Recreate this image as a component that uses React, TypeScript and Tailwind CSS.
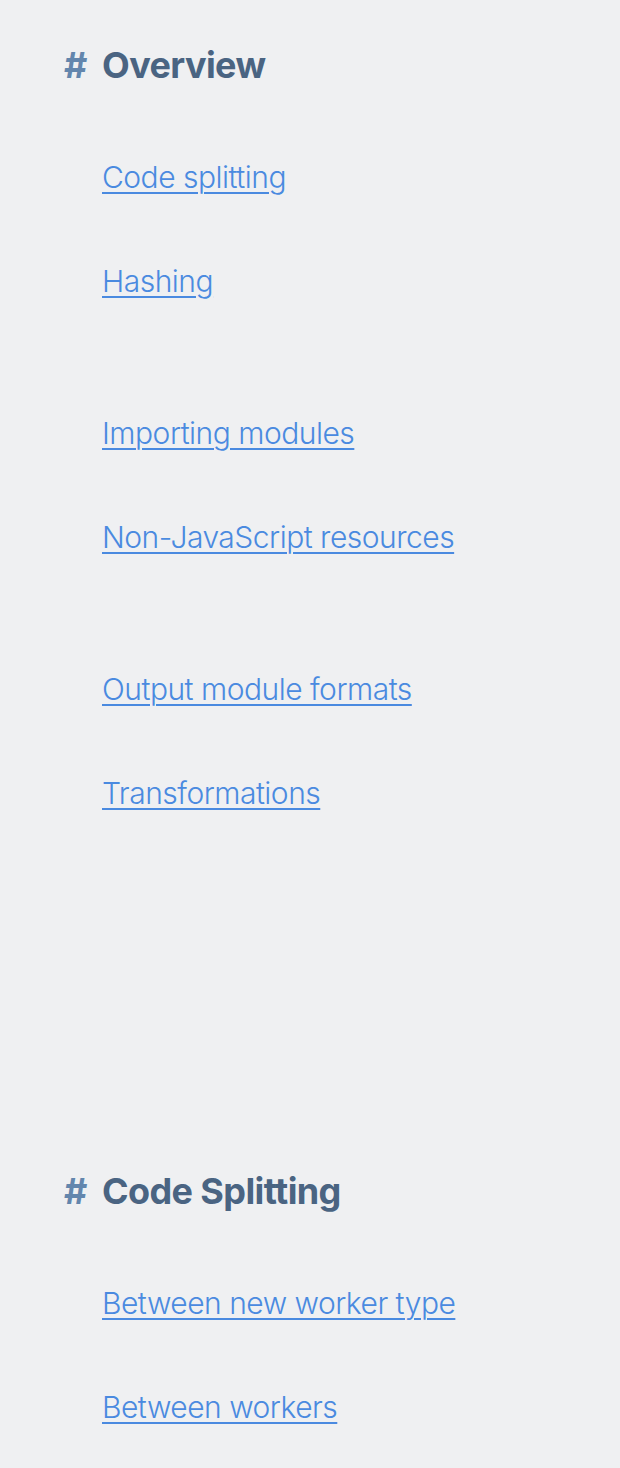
const groups = [
  {
    title: 'Overview',
    links: [
      ['Code splitting', 'Hashing'],
      ['Importing modules', 'Non-JavaScript resources'],
      ['Output module formats', 'Transformations'],
    ],
  },
  {
    title: 'Code Splitting',
    links: [['Between new worker type', 'Between workers']],
  },
];

export default function App() {
  return (
    <div className="min-h-[1468px] bg-[#eff0f2] font-['Inter',sans-serif] pl-[64px] pt-[40px]">
      {groups.map((g, i) => (
        <section key={g.title} className={i > 0 ? 'mt-[321px]' : ''}>
          <h2 className="flex items-baseline text-[36px] font-bold leading-[50px] tracking-[-0.6px] text-[#4a6482]">
            <span className="w-[38px] text-[#6386ad]">#</span>
            {g.title}
          </h2>
          <div className="pl-[38px]">
            {g.links.map((pair, j) => (
              <ul key={j} className="mt-[48px] first:mt-[35px]">
                {pair.map((l) => (
                  <li key={l} className="h-[104px] flex items-center">
                    <a href="#" className="text-[30px] font-light tracking-[-0.5px] text-[#4a8ae0] underline decoration-[1.5px] underline-offset-[4px]">
                      {l}
                    </a>
                  </li>
                ))}
              </ul>
            ))}
          </div>
        </section>
      ))}
    </div>
  );
}
